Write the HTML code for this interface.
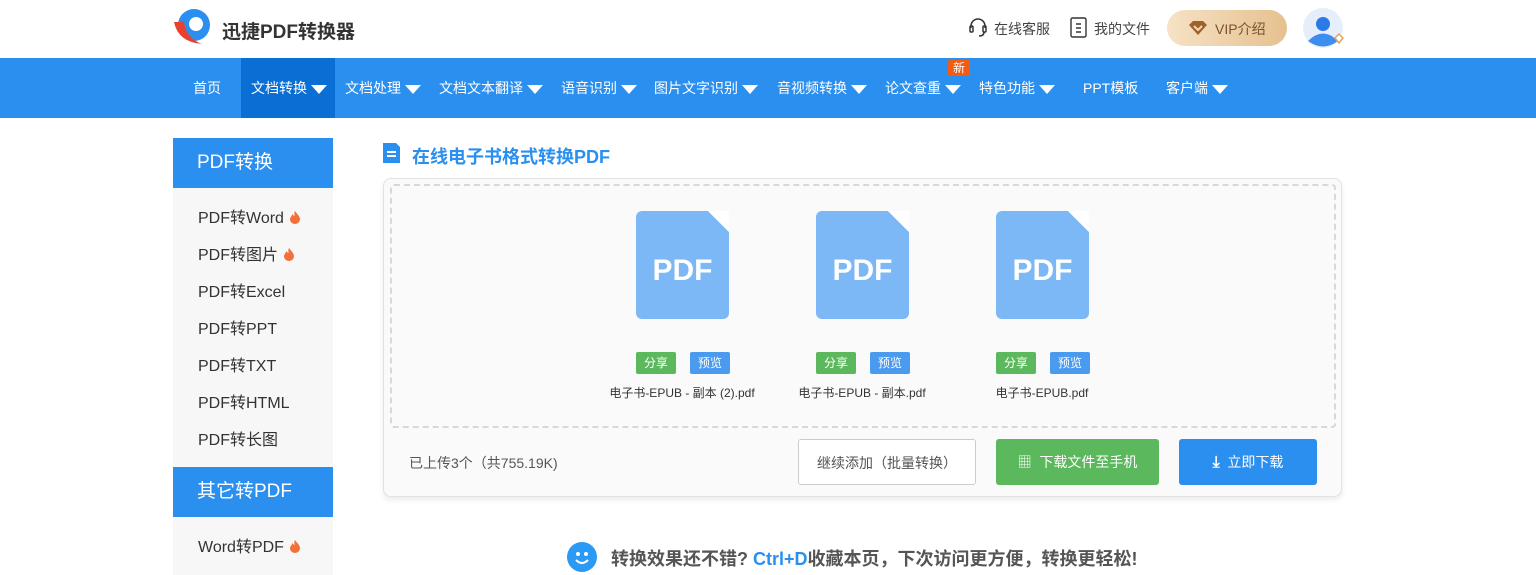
<!DOCTYPE html>
<html><head><meta charset="utf-8"><style>
*{margin:0;padding:0;box-sizing:border-box}
body{width:1536px;height:575px;overflow:hidden;background:#fff;font-family:"Liberation Sans","Noto Sans CJK SC",sans-serif;position:relative;color:#333}
.a{position:absolute;white-space:nowrap}
.nav{position:absolute;left:0;top:58px;width:1536px;height:60px;background:#2a8fef}
.ni{position:absolute;top:0;height:60px;line-height:60px;color:#fff;font-size:14px}
.tri{display:inline-block;width:0;height:0;border-left:8px solid transparent;border-right:8px solid transparent;border-top:9px solid #fff;margin-left:4px;vertical-align:middle}
.side{position:absolute;left:173px;top:138px;width:160px;height:437px;background:#f7f7f7}
.sh{position:absolute;left:173px;width:160px;height:50px;background:#2a8fef;color:#fff;font-size:19px;line-height:50px;padding-left:24px}
.si{position:absolute;left:198px;font-size:16px;color:#333}
.fire{display:inline-block;width:10px;height:13px;margin-left:6px;vertical-align:-1px}
.doc{position:absolute;width:93px;height:108px;top:211px}
.doc .pg{position:absolute;inset:0;background:#7bb8f5;border-radius:6px;clip-path:polygon(0 0,72px 0,93px 21px,93px 100%,0 100%)}
.doc .fd{position:absolute;right:0;top:0;width:21px;height:21px;background:#fff;clip-path:polygon(0 0,100% 100%,100% 0)}
.doc span{position:absolute;left:0;width:93px;top:43px;text-align:center;color:#fff;font-weight:bold;font-size:30px}
.tag{position:absolute;top:352px;width:40px;height:22px;line-height:22px;text-align:center;color:#fff;font-size:12px;border-radius:2px}
.g{background:#5cb85c}.b{background:#4a9af0}
.fn{position:absolute;top:384px;font-size:12px;color:#333;text-align:center;width:200px}
.btn{position:absolute;top:439px;height:46px;line-height:46px;text-align:center;font-size:14px;border-radius:3px}
</style></head><body>
<svg width="0" height="0" style="position:absolute"><defs><symbol id="f" viewBox="0 0 10 13"><path d="M5 0 C7 3 10 5 10 8.5 A5 4.5 0 0 1 0 8.5 C0 6 2 5 2.5 3 C3.5 4.5 4 5 4.5 5 C4.5 3 4 1.5 5 0Z" fill="#f4703a"/></symbol></defs></svg>
<svg class="a" style="left:172px;top:8px" width="42" height="40" viewBox="0 0 42 40"><circle cx="22" cy="17" r="16" fill="#2a8fef"/><circle cx="24" cy="16" r="7" fill="#fff"/><path d="M2 14 Q6 34 30 36 Q14 30 12 14 Z" fill="#e8412f"/></svg>
<div class="a" style="left:222px;top:17px;font-size:19px;font-weight:bold;color:#333">迅捷PDF转换器</div>
<svg class="a" style="left:968px;top:17px" width="20" height="22" viewBox="0 0 20 22" fill="none" stroke="#333" stroke-width="1.5"><path d="M3 11 V9 a7 7 0 0 1 14 0 V11"/><rect x="2" y="9" width="3" height="6" rx="1"/><rect x="15" y="9" width="3" height="6" rx="1"/><path d="M16 15 q0 4 -5 4"/></svg>
<div class="a" style="left:994px;top:19px;font-size:14px;color:#444">在线客服</div>
<svg class="a" style="left:1070px;top:17px" width="18" height="22" viewBox="0 0 18 22" fill="none" stroke="#333" stroke-width="1.4"><rect x="1" y="1" width="15" height="19" rx="1.5"/><path d="M6 7h5M6 11h5M6 15h5"/></svg>
<div class="a" style="left:1094px;top:19px;font-size:14px;color:#444">我的文件</div>
<div class="a" style="left:1167px;top:10px;width:120px;height:36px;border-radius:18px;background:linear-gradient(90deg,#f6e2c5,#e5c18f)"></div>
<svg class="a" style="left:1188px;top:20px" width="20" height="16" viewBox="0 0 20 16"><path d="M1 5 L5 1 H15 L19 5 L10 15 Z" fill="#a0622a"/><path d="M6 6 L10 10 L14 6" stroke="#f3d9b5" stroke-width="2" fill="none"/></svg>
<div class="a" style="left:1215px;top:19px;font-size:14px;color:#7a5230">VIP介绍</div>
<svg class="a" style="left:1303px;top:8px" width="44" height="42" viewBox="0 0 44 42"><circle cx="20" cy="20" r="20" fill="#e6eefb"/><circle cx="20" cy="16" r="7" fill="#2a7be5"/><path d="M5 33 Q20 18 35 33 Q20 44 5 33Z" fill="#3d8cf0"/><path d="M32 30 l4 -4 l4 4 l-4 5z" fill="#fff" stroke="#e0a35f" stroke-width="1.5"/></svg>
<div class="nav">
<div class="ni" style="left:241px;width:94px;background:#0a6fd4"></div>
<div class="ni" style="left:193px">首页</div>
<div class="ni" style="left:251px">文档转换<i class="tri"></i></div>
<div class="ni" style="left:345px">文档处理<i class="tri"></i></div>
<div class="ni" style="left:439px">文档文本翻译<i class="tri"></i></div>
<div class="ni" style="left:561px">语音识别<i class="tri"></i></div>
<div class="ni" style="left:654px">图片文字识别<i class="tri"></i></div>
<div class="ni" style="left:777px">音视频转换<i class="tri"></i></div>
<div class="ni" style="left:885px">论文查重<i class="tri"></i></div>
<div class="ni" style="left:979px">特色功能<i class="tri"></i></div>
<div class="ni" style="left:1083px">PPT模板</div>
<div class="ni" style="left:1166px">客户端<i class="tri"></i></div>
<div class="a" style="left:948px;top:2px;width:22px;height:16px;background:#f35a12;color:#fff;font-size:12px;line-height:16px;text-align:center;border-radius:2px">新</div>
</div>
<div class="side"></div>
<div class="sh" style="top:138px">PDF转换</div>
<div class="si" style="top:204px">PDF转Word<svg class="fire"><use href="#f"/></svg></div>
<div class="si" style="top:241px">PDF转图片<svg class="fire"><use href="#f"/></svg></div>
<div class="si" style="top:278px">PDF转Excel</div>
<div class="si" style="top:315px">PDF转PPT</div>
<div class="si" style="top:352px">PDF转TXT</div>
<div class="si" style="top:389px">PDF转HTML</div>
<div class="si" style="top:426px">PDF转长图</div>
<div class="sh" style="top:467px">其它转PDF</div>
<div class="si" style="top:533px">Word转PDF<svg class="fire"><use href="#f"/></svg></div>
<svg class="a" style="left:383px;top:143px" width="18" height="20" viewBox="0 0 18 20"><path d="M0 0H13L17 4V20H0Z" fill="#2a8fef"/><path d="M4 9h9M4 13h9" stroke="#fff" stroke-width="2"/></svg>
<div class="a" style="left:412px;top:143px;font-size:18px;font-weight:bold;color:#2a8fef">在线电子书格式转换PDF</div>
<div class="a" style="left:383px;top:178px;width:959px;height:319px;border:1px solid #e2e2e2;border-radius:8px;background:#fafafa;box-shadow:0 3px 6px rgba(0,0,0,.08)"></div>
<div class="a" style="left:390px;top:184px;width:946px;height:244px;border:2px dashed #d8d8d8;border-radius:4px"></div>
<div class="doc" style="left:636px"><div class="pg"></div><div class="fd"></div><span>PDF</span></div>
<div class="doc" style="left:816px"><div class="pg"></div><div class="fd"></div><span>PDF</span></div>
<div class="doc" style="left:996px"><div class="pg"></div><div class="fd"></div><span>PDF</span></div>
<div class="tag g" style="left:636px">分享</div><div class="tag b" style="left:690px">预览</div>
<div class="tag g" style="left:816px">分享</div><div class="tag b" style="left:870px">预览</div>
<div class="tag g" style="left:996px">分享</div><div class="tag b" style="left:1050px">预览</div>
<div class="fn" style="left:582px">电子书-EPUB - 副本 (2).pdf</div>
<div class="fn" style="left:762px">电子书-EPUB - 副本.pdf</div>
<div class="fn" style="left:942px">电子书-EPUB.pdf</div>
<div class="a" style="left:409px;top:453px;font-size:14px;color:#555">已上传3个（共755.19K)</div>
<div class="btn" style="left:798px;width:178px;background:#fff;border:1px solid #ccc;color:#555">继续添加（批量转换）</div>
<div class="btn" style="left:996px;width:163px;background:#5cb85c;color:#fff">▦&nbsp; 下载文件至手机</div>
<div class="btn" style="left:1179px;width:138px;background:#2a8fef;color:#fff"><b style="font-size:16px">⤓</b>&nbsp; 立即下载</div>
<svg class="a" style="left:567px;top:542px" width="30" height="30" viewBox="0 0 30 30"><circle cx="15" cy="15" r="15" fill="#2a9af5"/><circle cx="11" cy="12" r="2" fill="#fff"/><circle cx="19" cy="12" r="2" fill="#fff"/><path d="M9 18 q6 6 12 0" stroke="#fff" stroke-width="2" fill="none"/></svg>
<div class="a" style="left:611px;top:545px;font-size:18px;font-weight:bold;color:#555">转换效果还不错? <span style="color:#2a8fef">Ctrl+D</span>收藏本页，下次访问更方便，转换更轻松!</div>
</body></html>
